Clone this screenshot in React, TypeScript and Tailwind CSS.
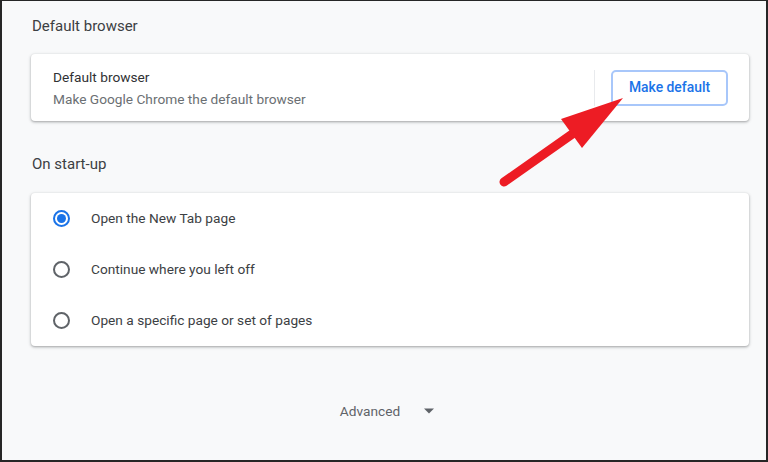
import * as React from "react";

const options = [
  { label: "Open the New Tab page", checked: true },
  { label: "Continue where you left off", checked: false },
  { label: "Open a specific page or set of pages", checked: false },
];

const cardShadow =
  "shadow-[0_1px_2px_rgba(60,64,67,0.3),0_1px_3px_1px_rgba(60,64,67,0.15)]";

const Radio = ({ checked }: { checked: boolean }) =>
  checked ? (
    <div className="size-[17px] rounded-full border-2 border-[#1a73e8] flex items-center justify-center">
      <div className="size-[9px] rounded-full bg-[#1a73e8]" />
    </div>
  ) : (
    <div className="size-[17px] rounded-full border-2 border-[#5f6368]" />
  );

const Arrow = () => (
  <svg
    className="absolute left-0 top-0 pointer-events-none"
    width={768}
    height={462}
    viewBox="0 0 768 462"
  >
    <line
      x1={502}
      y1={181}
      x2={576}
      y2={129}
      stroke="#ed1c24"
      strokeWidth={9}
      strokeLinecap="round"
    />
    <polygon points="621,97 559,118 580,147" fill="#ed1c24" />
  </svg>
);

export default function App() {
  return (
    <div
      className="relative w-[768px] h-[462px] overflow-hidden bg-[#f8f9fa] border-t border-l-2 border-r-2 border-b-2 border-[#262626] pl-[29px] pr-[17px] text-[13.7px]"
      style={{ fontFamily: "Roboto, 'Liberation Sans', sans-serif" }}
    >
      <div className="h-[53px] pt-[15px] pl-px text-[15px] leading-5 text-[#3c4043]">
        Default browser
      </div>

      <div className={`h-[67px] bg-white rounded ${cardShadow} flex items-center pl-[22px] pr-[21px]`}>
        <div className="flex-1 flex flex-col leading-[22px]">
          <p className="text-[#303134]">Default browser</p>
          <p className="text-[#6b6f73]">Make Google Chrome the default browser</p>
        </div>
        <div className="w-px h-[36px] bg-[#e8eaed] mr-[16px]" />
        <button className="w-[117px] h-[36px] rounded-[5px] border-2 border-[#a8c7fa] text-[#1a73e8] font-medium text-[13.9px]">
          Make default
        </button>
      </div>

      <div className="h-[72px] pt-[33px] pl-px text-[15px] leading-5 text-[#3c4043]">
        On start-up
      </div>

      <div className={`bg-white rounded ${cardShadow} flex flex-col`}>
        {options.map((opt) => (
          <div key={opt.label} className="h-[51px] flex items-center pl-[22px] gap-[21px]">
            <Radio checked={opt.checked} />
            <span className="text-[#3c4043]">{opt.label}</span>
          </div>
        ))}
      </div>

      <div className="mt-[55px] flex items-center justify-center gap-[24px] pr-[6px] text-[#5f6368]">
        <span>Advanced</span>
        <svg width={10} height={6} viewBox="0 0 10 5">
          <path d="M0 0h10L5 5z" fill="#5f6368" />
        </svg>
      </div>

      <Arrow />
    </div>
  );
}
